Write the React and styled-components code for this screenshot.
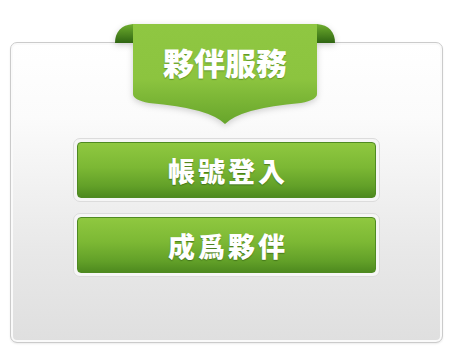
import React from 'react';
import styled, { createGlobalStyle } from 'styled-components';

const GlobalStyle = createGlobalStyle`
  html, body {
    margin: 0;
    padding: 0;
    background: #ffffff;
  }
  body {
    font-family: "Noto Sans CJK TC", "Noto Sans CJK SC", sans-serif;
  }
`;

const Page = styled.div`
  width: 474px;
  height: 348px;
  padding: 42px 0 0 10px;
  box-sizing: border-box;
`;

const Card = styled.section`
  width: 433px;
  height: 301px;
  box-sizing: border-box;
  border: 1px solid #cbcbcb;
  border-radius: 7px;
  background: linear-gradient(to bottom, #ffffff 0%, #fbfbfb 25%, #e8e8e8 70%, #dfdfdf 100%);
  box-shadow: inset 0 0 0 2px #fafafa, 0 1px 2px rgba(0, 0, 0, 0.08);
  display: flex;
  flex-direction: column;
  align-items: center;
`;

const Ribbon = styled.div`
  position: relative;
  width: 220px;
  height: 100px;
  margin-top: -19px;
  margin-left: -3px;
  display: flex;
  justify-content: center;
`;

const RibbonArt = styled.svg`
  position: absolute;
  inset: 0;
  filter: drop-shadow(0 2px 3px rgba(0, 0, 0, 0.18));
`;

const RibbonTitle = styled.h1`
  position: relative;
  margin: 18px 0 0 0;
  font-size: 31px;
  line-height: 40px;
  font-weight: 900;
  color: #ffffff;
  text-shadow: 0 1px 1px rgba(40, 90, 10, 0.45);
`;

const ButtonList = styled.div`
  display: flex;
  flex-direction: column;
  gap: 11px;
  margin-top: 14px;
`;

const ButtonFrame = styled.div`
  width: 307px;
  padding: 3px;
  box-sizing: border-box;
  border: 1px solid #dcdcdc;
  border-radius: 7px;
  background: #f6f6f6;
`;

const GreenButton = styled.button`
  width: 100%;
  height: 56px;
  border: 1px solid #4f8a22;
  border-radius: 4px;
  background: linear-gradient(to bottom, #8fc840 0%, #7cb834 45%, #62a028 80%, #4e8a1f 100%);
  color: #ffffff;
  font-family: "Noto Sans CJK TC", "Noto Sans CJK SC", sans-serif;
  font-size: 27px;
  font-weight: 900;
  letter-spacing: 3px;
  text-indent: 3px;
  text-shadow: 0 1px 1px rgba(30, 70, 10, 0.5);
  cursor: pointer;
  display: flex;
  align-items: center;
  justify-content: center;
  padding: 0;
`;

function RibbonShape() {
  return (
    <RibbonArt width="220" height="100" viewBox="0 0 220 100">
      <defs>
        <linearGradient id="fold" x1="0" y1="0" x2="0" y2="1">
          <stop offset="0" stopColor="#6fae2e" />
          <stop offset="1" stopColor="#2f6512" />
        </linearGradient>
        <linearGradient id="band" x1="0" y1="0" x2="0" y2="1">
          <stop offset="0" stopColor="#8fc742" />
          <stop offset="0.55" stopColor="#8cc43f" />
          <stop offset="1" stopColor="#67a52b" />
        </linearGradient>
      </defs>
      <path d="M0 19 C0 8 6 1 18 0 L22 0 L22 19 Z" fill="url(#fold)" />
      <path d="M220 19 C220 8 214 1 202 0 L198 0 L198 19 Z" fill="url(#fold)" />
      <path
        d="M18 0 H202 V70 Q202 76 186 79 Q126 84 110 100 Q94 84 34 79 Q18 76 18 70 Z"
        fill="url(#band)"
      />
    </RibbonArt>
  );
}

export default function App() {
  return (
    <>
      <GlobalStyle />
      <Page>
        <Card>
          <Ribbon>
            <RibbonShape />
            <RibbonTitle>夥伴服務</RibbonTitle>
          </Ribbon>
          <ButtonList>
            <ButtonFrame>
              <GreenButton>帳號登入</GreenButton>
            </ButtonFrame>
            <ButtonFrame>
              <GreenButton>成爲夥伴</GreenButton>
            </ButtonFrame>
          </ButtonList>
        </Card>
      </Page>
    </>
  );
}
